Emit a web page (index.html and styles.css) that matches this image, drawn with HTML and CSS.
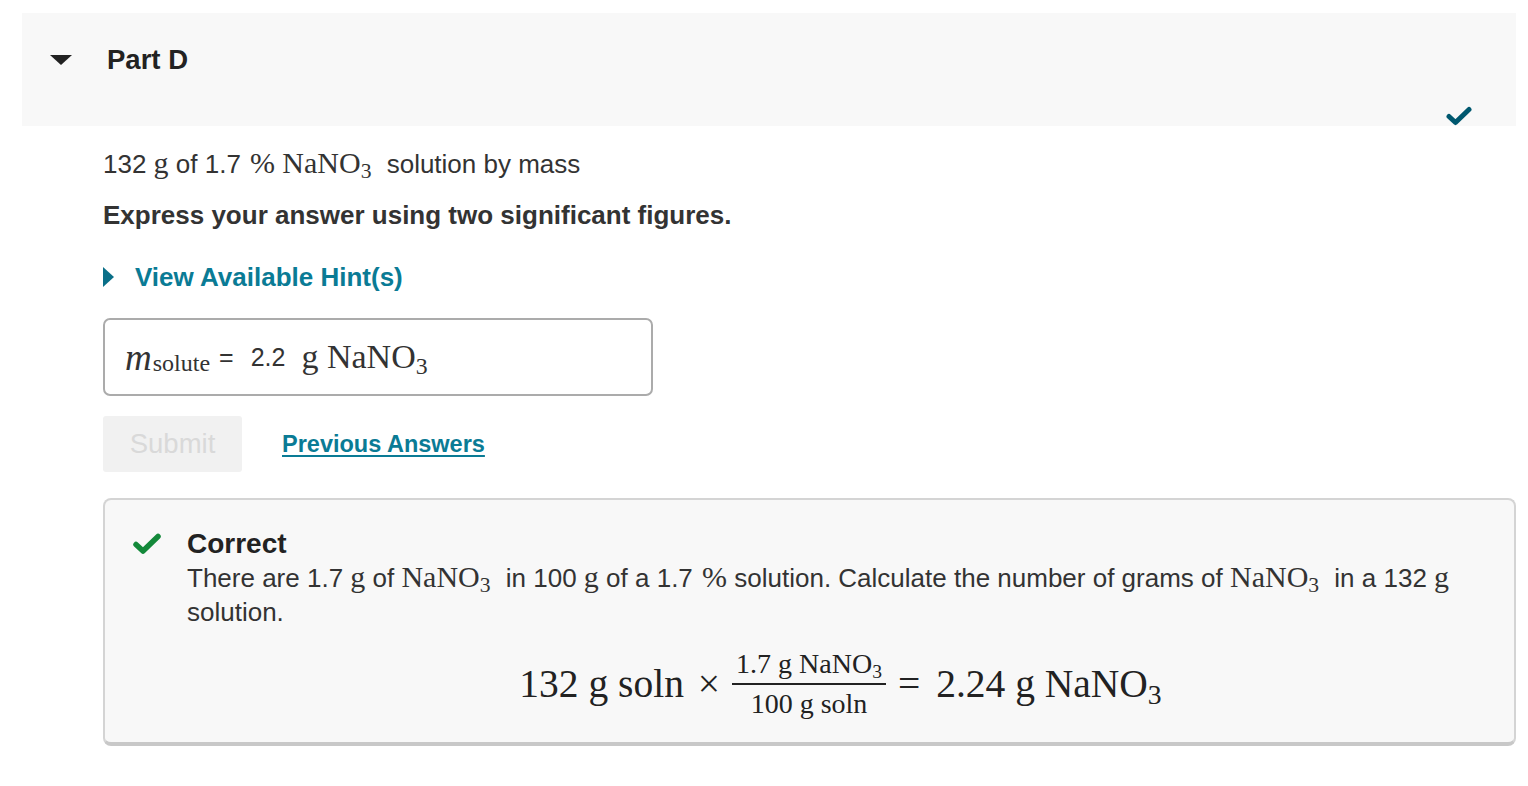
FILE: index.html
```html
<!DOCTYPE html>
<html>
<head>
<meta charset="utf-8">
<link rel="stylesheet" href="styles.css">
</head>
<body>
<div class="page">
  <div class="part-head">
    <span class="caret-down"></span>
    <h2 class="part-title">Part D</h2>
    <svg class="status-check" width="26" height="20" viewBox="0 0 26 20"><path d="M3 10.5 L9.5 16.5 L23 3.5" fill="none" stroke="#00586f" stroke-width="5" stroke-linecap="round" stroke-linejoin="round"/></svg>
  </div>
  <div class="part-body">
    <p class="question">132 <span class="m">g</span> of 1.7 <span class="m pct">%</span> <span class="m chem">NaNO<sub>3</sub></span> solution by mass</p>
    <p class="instr">Express your answer using two significant figures.</p>
    <div class="hint"><span class="caret-right"></span><span class="hint-text">View Available Hint(s)</span></div>
    <div class="answer-box">
      <span class="m var">m</span><span class="m sub-s">solute</span><span class="eq">=</span><span class="val">2.2</span><span class="m unit">g NaNO<sub>3</sub></span>
    </div>
    <div class="actions">
      <span class="submit">Submit</span>
      <a class="prev" href="#">Previous Answers</a>
    </div>
    <div class="feedback">
      <svg class="ok-check" width="28" height="22" viewBox="0 0 28 22"><path d="M3 11.5 L10 18 L25 3.5" fill="none" stroke="#13893a" stroke-width="5.5" stroke-linecap="round" stroke-linejoin="round"/></svg>
      <div class="fb-content">
        <div class="fb-title">Correct</div>
        <p class="fb-text">There are 1.7 <span class="m">g</span> of <span class="m chem">NaNO<sub>3</sub></span> in 100 <span class="m">g</span> of a 1.7 <span class="m pct">%</span> solution. Calculate the number of grams of <span class="m chem">NaNO<sub>3</sub></span> in a 132 <span class="m">g</span> solution.</p>
        <div class="display">
          <span>132 g soln <span class="times">×</span></span>
          <span class="frac"><span class="num">1.7 g NaNO<sub>3</sub></span><span class="den">100 g soln</span></span>
          <span><span class="eqs">=</span> 2.24 g NaNO<sub>3</sub></span>
        </div>
      </div>
    </div>
  </div>
</div>
</body>
</html>
```

FILE: styles.css
```css
html, body {
  margin: 0;
  padding: 0;
  background: #fff;
}
body {
  font-family: "Liberation Sans", Arial, sans-serif;
  color: #333;
  font-size: 26px;
}
.page {
  padding: 13px 12px 40px 22px;
}
.part-head {
  background: #f8f8f8;
  height: 113px;
  display: flex;
  align-items: flex-start;
  position: relative;
}
.caret-down {
  width: 0;
  height: 0;
  border-left: 11px solid transparent;
  border-right: 11px solid transparent;
  border-top: 10px solid #222;
  margin: 42px 0 0 28px;
}
.part-title {
  margin: 30px 0 0 35px;
  font-size: 27.5px;
  font-weight: bold;
  color: #222;
  line-height: 34px;
}
.status-check {
  position: absolute;
  right: 44px;
  bottom: 0px;
}
.part-body {
  margin-left: 81px;
}
.m {
  font-family: "Liberation Serif", "Times New Roman", serif;
  font-size: 30px;
}
.pct { margin-left: 2px; }
.chem { margin-right: 8px; }
sub {
  font-size: 0.72em;
  vertical-align: -0.25em;
  line-height: 0;
}
.question {
  margin: 0;
  padding-top: 20px;
  line-height: 34px;
}
.instr {
  margin: 17px 0 0;
  font-weight: bold;
  font-size: 26px;
  line-height: 34px;
}
.hint {
  margin-top: 29px;
  display: flex;
  align-items: center;
  height: 32px;
}
.caret-right {
  width: 0;
  height: 0;
  border-top: 10px solid transparent;
  border-bottom: 10px solid transparent;
  border-left: 11px solid #0a6f88;
}
.hint-text {
  margin-left: 21px;
  color: #0a7b95;
  font-weight: bold;
  font-size: 26px;
}
.answer-box {
  margin-top: 25px;
  width: 550px;
  height: 78px;
  border: 2px solid #ababab;
  border-radius: 7px;
  box-sizing: border-box;
  display: flex;
  align-items: center;
  padding-left: 20px;
  font-size: 25px;
}
.var {
  font-style: italic;
  font-size: 37px;
  letter-spacing: 1px;
}
.sub-s {
  font-size: 24px;
  margin-top: 12px;
}
.eq {
  margin: 0 17px 0 9px;
}
.val {
  margin-right: 16px;
}
.unit {
  font-size: 34px;
}
.unit sub { font-size: 0.7em; }
.actions {
  margin-top: 20px;
  display: flex;
  align-items: center;
}
.submit {
  width: 139px;
  height: 56px;
  background: #f1f1f1;
  border-radius: 3px;
  color: #d9d9d9;
  font-size: 27.5px;
  display: flex;
  align-items: center;
  justify-content: center;
}
.prev {
  margin-left: 40px;
  color: #0a7b95;
  font-weight: bold;
  font-size: 23.5px;
  text-decoration: underline;
  text-underline-offset: 3px;
  text-decoration-thickness: 2px;
}
.feedback {
  margin-top: 26px;
  background: #f8f8f8;
  border: 2px solid #d4d4d4;
  border-bottom: 4px solid #c8c8c8;
  border-radius: 8px;
  display: flex;
  padding: 28px 20px 21px 28px;
  box-sizing: border-box;
}
.ok-check {
  margin-top: 5px;
  flex: none;
}
.fb-content {
  margin-left: 26px;
  flex: 1;
}
.fb-title {
  font-weight: bold;
  font-size: 28px;
  line-height: 32px;
  color: #222;
}
.fb-text {
  margin: 0;
  line-height: 34px;
}
.display {
  margin-top: 18px;
  display: flex;
  justify-content: center;
  align-items: center;
  font-family: "Liberation Serif", "Times New Roman", serif;
  font-size: 39.5px;
  color: #222;
  gap: 12px;
}
.display sub { font-size: 0.7em; }
.times { margin-left: 4px; }
.eqs { margin-right: 6px; }
.frac {
  display: inline-flex;
  flex-direction: column;
  align-items: center;
  font-size: 28px;
  line-height: 34px;
}
.num {
  border-bottom: 2px solid #222;
  padding: 0 4px 2px;
}
.den { padding-top: 2px; }
```
